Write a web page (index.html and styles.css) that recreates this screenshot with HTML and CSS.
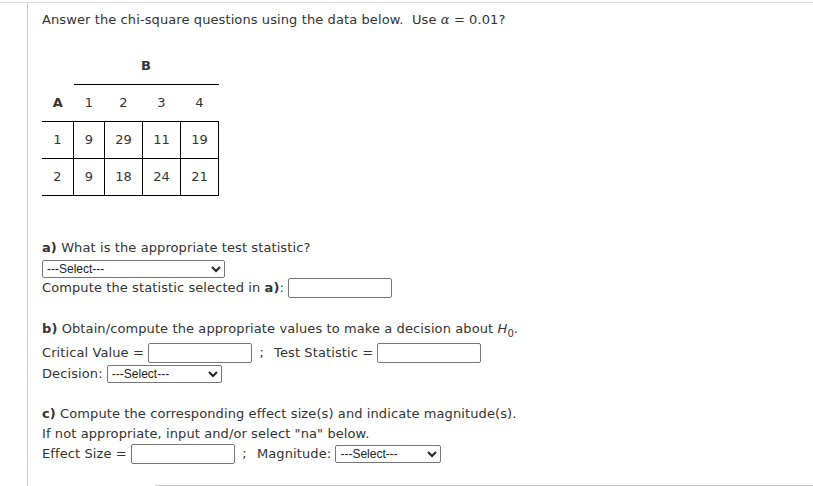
FILE: index.html
```html
<!DOCTYPE html>
<html>
<head>
<meta charset="utf-8">
<link rel="stylesheet" href="styles.css">
</head>
<body>
<div class="frame">
  <div class="panel">
    <p class="title">Answer the chi-square questions using the data below.&nbsp; Use <i class="alpha">α</i> = 0.01?</p>
    <table class="data">
      <tr class="r-b"><td></td><th colspan="4" class="bhead">B</th></tr>
      <tr class="r-h"><th class="a">A</th><td>1</td><td>2</td><td>3</td><td>4</td></tr>
      <tr class="r-d"><td class="a">1</td><td class="c">9</td><td class="c">29</td><td class="c">11</td><td class="c">19</td></tr>
      <tr class="r-d"><td class="a">2</td><td class="c">9</td><td class="c">18</td><td class="c">24</td><td class="c">21</td></tr>
    </table>

    <div class="q qa">
      <div class="line"><b>a)</b> What is the appropriate test statistic?</div>
      <div class="sel-line"><select class="sel sel-a"><option>---Select---</option></select></div>
      <div class="line">Compute the statistic selected in <b>a)</b>: <input class="box" type="text"></div>
    </div>

    <div class="q qb">
      <div class="line"><b>b)</b> Obtain/compute the appropriate values to make a decision about <i>H</i><sub>0</sub>.</div>
      <div class="line row">Critical Value = <input class="box" type="text"> <span class="semi">;</span> Test Statistic = <input class="box" type="text"></div>
      <div class="line">Decision: <select class="sel sel-b"><option>---Select---</option></select></div>
    </div>

    <div class="q qc">
      <div class="line"><b>c)</b> Compute the corresponding effect size(s) and indicate magnitude(s).</div>
      <div class="line">If not appropriate, input and/or select "na" below.</div>
      <div class="line">Effect Size = <input class="box" type="text"> <span class="semi">;</span> Magnitude: <select class="sel sel-c"><option>---Select---</option></select></div>
    </div>
    <div class="footer-rule"></div>
  </div>
</div>
</body>
</html>
```

FILE: styles.css
```css
html, body {
  margin: 0;
  padding: 0;
  background: #fff;
}
body {
  font-family: "DejaVu Sans", Verdana, sans-serif;
  font-size: 13px;
  letter-spacing: 0.1px;
  color: #333;
}
.frame {
  margin-top: 2px;
  border-top: 1px solid #ddd;
  height: 484px;
  padding-left: 27px;
  box-sizing: border-box;
}
.panel {
  border-left: 1px solid #ccc;
  height: 100%;
  padding-left: 14px;
  box-sizing: border-box;
  position: relative;
}
.title {
  margin: 0;
  padding-top: 7px;
  line-height: 20px;
}
.alpha {
  font-family: "DejaVu Serif", serif;
}
.data {
  border-collapse: collapse;
  margin-top: 18px;
  text-align: center;
  letter-spacing: 0;
}
.data td, .data th {
  padding: 0;
  height: 36px;
}
.data th { font-weight: bold; }
.data tr > :nth-child(1) { width: 31px; }
.data tr > :nth-child(2) { width: 30px; }
.data tr > :nth-child(3),
.data tr > :nth-child(4),
.data tr > :nth-child(5) { width: 37px; }
.bhead {
  border-bottom: 1px solid #000;
}
.data .r-b th { height: 35px; }
.r-d td {
  border-top: 1px solid #000;
  border-bottom: 1px solid #000;
}
.r-d td.c {
  border-left: 1px solid #000;
  border-right: 1px solid #000;
}
.q .line {
  line-height: 20px;
  height: 20px;
}
.qa { margin-top: 42px; }
.sel-line { height: 20px; padding-top: 2px; box-sizing: border-box; }
.qb { margin-top: 21px; }
.qb .row { height: 22px; line-height: 22px; margin-top: 3px; }
.qc { margin-top: 20px; }
.box {
  width: 104px;
  height: 20px;
  box-sizing: border-box;
  border: 1px solid #767676;
  border-radius: 2px;
  vertical-align: middle;
  padding: 0 2px;
  margin: 0;
  font: 13px "DejaVu Sans", sans-serif;
}
.semi { margin: 0 6px 0 3px; }
.sel {
  font-family: "Liberation Sans", Arial, sans-serif;
  font-size: 12px;
  letter-spacing: 0;
  color: #222;
  height: 18px;
  border: 1px solid #767676;
  border-radius: 2px;
  background: #fff;
  vertical-align: middle;
  margin: 0;
  padding: 0;
}
.sel-a { width: 183px; }
.sel-b { width: 115px; }
.sel-c { width: 106px; }
sub { font-size: 10px; }
.footer-rule {
  position: absolute;
  left: 127px;
  right: 0;
  bottom: 0;
  border-top: 1px solid #ccc;
}
```
